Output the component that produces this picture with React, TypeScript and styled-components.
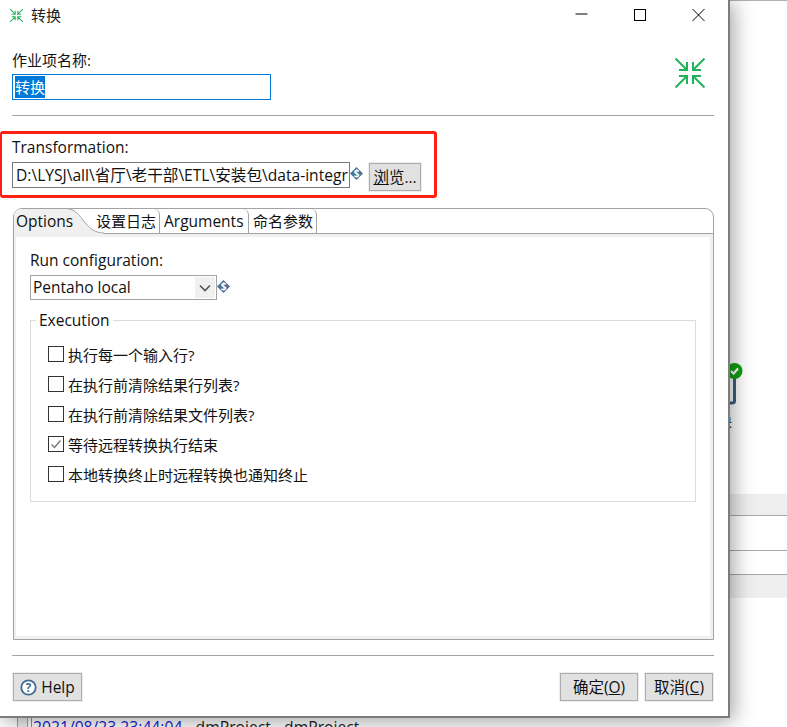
import React from "react";
import styled, { createGlobalStyle } from "styled-components";

const Global = createGlobalStyle`
  html, body { margin: 0; padding: 0; background: #fff; }
  body { font-family: "Open Sans", "Noto Sans CJK SC", sans-serif; font-size: 15px; color: #111; }
`;

const Page = styled.div`
  position: relative;
  width: 787px;
  height: 727px;
  overflow: hidden;
  background: #fff;
`;

const SidePanel = styled.div`
  margin-left: 729px;
  height: 727px;
  border-top: 1px solid #b0b0b0;
  margin-top: 0;
  padding-top: 493px;
  box-sizing: border-box;
`;

const SideBand = styled.div<{ $h: number; $gray?: boolean; $line?: boolean }>`
  height: ${(p) => p.$h}px;
  box-sizing: border-box;
  background: ${(p) => (p.$gray ? "#efefef" : "#fff")};
  border-bottom: ${(p) => (p.$line ? "1px solid #a8a8a8" : "none")};
`;

const Node = styled.svg`
  position: absolute;
  left: 720px;
  top: 360px;
`;

const NodeLabel = styled.span`
  position: absolute;
  left: 717px;
  top: 410px;
  font-size: 15px;
  line-height: 20px;
`;

const LogStrip = styled.div`
  position: absolute;
  left: 17px;
  top: 717px;
  display: flex;
  height: 10px;
  overflow: hidden;
`;

const Grip = styled.div`
  width: 9px;
  height: 10px;
  border-left: 1px solid #a0a0a0;
  border-right: 1px solid #a0a0a0;
  margin-right: 3px;
  background: #f0f0f0;
`;

const LogText = styled.div`
  border-left: 1px solid #909090;
  padding-left: 1px;
  white-space: pre;
  font-size: 15.7px;
  line-height: 20px;
  color: #222;
`;

const LogDate = styled.span`
  color: #1a1ad8;
`;

const Dialog = styled.div`
  position: absolute;
  left: 0;
  top: 0;
  width: 730px;
  height: 718px;
  box-sizing: border-box;
  background: #fff;
  border-right: 2px solid #7c7c7c;
  border-bottom: 2px solid #7c7c7c;
  box-shadow: 3px 3px 20px rgba(0, 0, 0, 0.38);
  display: flex;
  flex-direction: column;
`;

const TitleBar = styled.div`
  height: 30px;
  display: flex;
  align-items: center;
  position: relative;
`;

const TitleIcon = styled.div`
  width: 13px;
  height: 13px;
  margin-left: 10px;
  margin-right: 8px;
  display: flex;
`;

const TitleText = styled.span`
  font-size: 15px;
  color: #222;
  line-height: 30px;
`;

const WindowButtons = styled.div`
  margin-left: auto;
  margin-right: 23px;
  display: flex;
  gap: 46px;
  align-items: center;
`;

const Body = styled.div`
  flex: 1;
  padding: 20px 14px 0 12px;
  display: flex;
  flex-direction: column;
`;

const HeaderRow = styled.div`
  display: flex;
  justify-content: space-between;
  align-items: flex-start;
  height: 65px;
`;

const FieldLabel = styled.div<{ $cjk?: boolean }>`
  font-size: ${(p) => (p.$cjk ? 15 : 15.5)}px;
  line-height: 20px;
  height: 20px;
`;

const NameInput = styled.div`
  width: 259px;
  height: 26px;
  margin-top: 4px;
  box-sizing: border-box;
  border: 1px solid #0078d7;
  padding: 1px 2px;
  line-height: 22px;
  font-size: 15px;
`;

const Selected = styled.span`
  display: inline-block;
  background: #0078d7;
  color: #fff;
  height: 22px;
`;

const BigIconSlot = styled.div`
  margin: 8px 9px 0 0;
`;

const Rule = styled.div`
  height: 1px;
  background: #a3a3a3;
`;

const PathSection = styled.div`
  padding-top: 21px;
  height: 92px;
  box-sizing: border-box;
`;

const PathRow = styled.div`
  display: flex;
  align-items: flex-start;
  margin-top: 5px;
`;

const PathInput = styled.div`
  width: 338px;
  height: 26px;
  box-sizing: border-box;
  border: 1px solid #7a7a7a;
  padding: 0 0 0 3px;
  overflow: hidden;
  white-space: nowrap;
  font-size: 15.6px;
  line-height: 24px;
`;

const Hint = styled.svg`
  flex: none;
  margin-top: 5px;
`;

const Button = styled.button<{ $w: number }>`
  width: ${(p) => p.$w}px;
  height: 28px;
  box-sizing: border-box;
  background: #e1e1e1;
  border: 1px solid #adadad;
  outline: 1px solid #eeeeee;
  border-radius: 0;
  padding: 0;
  font-family: inherit;
  font-size: 15.5px;
  line-height: 26px;
  color: #111;
  display: inline-flex;
  align-items: center;
  justify-content: center;
  gap: 4px;
`;

const BrowseButton = styled(Button)`
  margin: 1px 0 0 6px;
`;

const Folder = styled.div`
  height: 432px;
  margin-left: 1px;
  box-sizing: border-box;
  border: 1px solid #a3a3a3;
  border-radius: 9px 9px 0 0;
  display: flex;
  flex-direction: column;
`;

const TabBar = styled.div`
  height: 24px;
  flex: none;
  display: flex;
  position: relative;
  border-bottom: 1px solid #a3a3a3;
  box-sizing: content-box;
`;

const Tab = styled.div<{ $w: number; $pl: number; $cjk?: boolean }>`
  position: relative;
  width: ${(p) => p.$w}px;
  padding-left: ${(p) => p.$pl}px;
  box-sizing: border-box;
  font-size: ${(p) => (p.$cjk ? 15 : 15.5)}px;
  line-height: 25px;
  white-space: nowrap;
  border-right: 1px solid #a3a3a3;
  border-top-right-radius: 6px;
`;

const ActiveTab = styled(Tab)`
  border-right: none;
`;

const TabText = styled.span`
  position: relative;
`;

const Shoulder = styled.svg`
  position: absolute;
  left: 0;
  top: 0;
`;

const TabPanel = styled.div`
  flex: 1;
  border: 3px solid #f0f0f0;
  border-left-width: 2px;
  padding: 13px 14px 0 14px;
`;

const ComboRow = styled.div`
  display: flex;
  align-items: flex-start;
  margin-top: 5px;
`;

const Combo = styled.div`
  width: 187px;
  height: 25px;
  box-sizing: border-box;
  border: 1px solid #a3a3a3;
  display: flex;
  justify-content: space-between;
  padding-left: 2px;
  font-size: 15.5px;
  line-height: 23px;
`;

const ComboArrow = styled.div`
  width: 20px;
  margin: 1px;
  background: #f0f0f0;
  display: flex;
  align-items: center;
  justify-content: center;
`;

const Group = styled.fieldset`
  margin: 10px 0 0;
  padding: 9px 0 0 17px;
  height: 192px;
  box-sizing: border-box;
  border: 1px solid #dcdcdc;
  min-inline-size: 0;
  display: flex;
  flex-direction: column;
`;

const GroupLegend = styled.legend`
  margin-left: -12px;
  padding: 0 3px;
  font-size: 15.5px;
  line-height: 20px;
`;

const CheckRow = styled.div`
  display: flex;
  align-items: center;
  height: 30px;
  gap: 4px;
  font-size: 15px;
`;

const Box = styled.div`
  width: 16px;
  height: 16px;
  box-sizing: border-box;
  border: 1px solid #333;
  display: flex;
  align-items: center;
  justify-content: center;
`;

const Footer = styled.div`
  display: flex;
  align-items: flex-start;
  padding: 17px 1px 0 1px;
`;

const FooterRule = styled(Rule)`
  margin-top: 15px;
`;

const FooterRight = styled.div`
  margin-left: auto;
  display: flex;
  gap: 7px;
`;

const RedBox = styled.div`
  position: absolute;
  left: 0;
  top: 131px;
  width: 437px;
  height: 67px;
  box-sizing: border-box;
  border: 3px solid #ff2015;
  border-left-width: 2px;
  border-radius: 3px;
  pointer-events: none;
`;

const Converge = ({ size, stroke }: { size: number; stroke: number }) => (
  <svg width={size} height={size} viewBox="0 0 30 30" fill="none" stroke="#22b35a" strokeWidth={stroke}>
    <path d="M0.5 0.5L12 12M12 4V12H4M29.5 0.5L18 12M18 4V12H26M0.5 29.5L12 18M12 26V18H4M29.5 29.5L18 18M18 26V18H26" />
  </svg>
);

const Diamond = () => (
  <Hint width="13" height="13" viewBox="0 0 13 13">
    <path d="M6.5 0L13 6.5L6.5 13L0 6.5Z" fill="#4a7396" />
    <text x="6.5" y="10.2" fontSize="10" fontWeight="700" fill="#fff" textAnchor="middle" fontFamily="Open Sans, sans-serif">$</text>
  </Hint>
);

const Check = ({ label, checked }: { label: string; checked?: boolean }) => (
  <CheckRow>
    <Box>
      {checked && (
        <svg width="12" height="12" viewBox="0 0 12 12" fill="none" stroke="#777" strokeWidth="1.4">
          <path d="M1.5 6.5L4.5 9.5L10.5 2.5" />
        </svg>
      )}
    </Box>
    {label}
  </CheckRow>
);

export default function App() {
  return (
    <Page>
      <Global />
      <SidePanel>
        <SideBand $h={22} $gray $line />
        <SideBand $h={35} $line />
        <SideBand $h={24} $line />
        <SideBand $h={23} $gray />
      </SidePanel>
      <Node width="24" height="48" viewBox="0 0 24 48">
        <path d="M14.5 12V41Q14.5 43 12 43H0" fill="none" stroke="#3f5f7f" strokeWidth="3" />
        <circle cx="14.5" cy="11" r="8" fill="#12a012" />
        <path d="M11 11L13.6 13.6L18 8.6" fill="none" stroke="#fff" strokeWidth="2.2" />
      </Node>
      <NodeLabel>换</NodeLabel>
      <LogStrip>
        <Grip />
        <LogText>
          <LogDate>2021/08/23 23:44:04</LogDate>{" - dmProject - dmProject"}
        </LogText>
      </LogStrip>

      <Dialog>
        <TitleBar>
          <TitleIcon>
            <Converge size={13} stroke={2.4} />
          </TitleIcon>
          <TitleText>转换</TitleText>
          <WindowButtons>
            <svg width="13" height="12" viewBox="0 0 13 12" stroke="#000" strokeWidth="1" fill="none">
              <path d="M0.5 5H12.5" />
            </svg>
            <svg width="12" height="12" viewBox="0 0 12 12" stroke="#000" strokeWidth="1" fill="none">
              <rect x="0.5" y="0.5" width="11" height="11" />
            </svg>
            <svg width="13" height="12" viewBox="0 0 13 12" stroke="#000" strokeWidth="1" fill="none">
              <path d="M0.5 0L12.5 12M12.5 0L0.5 12" />
            </svg>
          </WindowButtons>
        </TitleBar>
        <Body>
          <HeaderRow>
            <div>
              <FieldLabel $cjk>作业项名称:</FieldLabel>
              <NameInput>
                <Selected>转换</Selected>
              </NameInput>
            </div>
            <BigIconSlot>
              <Converge size={30} stroke={2} />
            </BigIconSlot>
          </HeaderRow>
          <Rule />
          <PathSection>
            <FieldLabel>Transformation:</FieldLabel>
            <PathRow>
              <PathInput>D:\LYSJ\all\省厅\老干部\ETL\安装包\data-integr</PathInput>
              <Diamond />
              <BrowseButton $w={52}>
                <span>
                  <u>浏</u>览...
                </span>
              </BrowseButton>
            </PathRow>
          </PathSection>
          <Folder>
            <TabBar>
              <Shoulder width="92" height="25" viewBox="0 0 92 25">
                <path d="M0 25V8Q0 0 8 0H54C68 0 70 24 90 24V25Z" fill="#f0f0f0" />
                <path d="M54 0C68 0 70 24 90 24" fill="none" stroke="#a3a3a3" />
              </Shoulder>
              <ActiveTab $w={82} $pl={2}>
                <TabText>Options</TabText>
              </ActiveTab>
              <Tab $w={64} $pl={0} $cjk>
                <TabText>设置日志</TabText>
              </Tab>
              <Tab $w={89} $pl={4}>
                <TabText>Arguments</TabText>
              </Tab>
              <Tab $w={68} $pl={4} $cjk>
                <TabText>命名参数</TabText>
              </Tab>
            </TabBar>
            <TabPanel>
              <FieldLabel>Run configuration:</FieldLabel>
              <ComboRow>
                <Combo>
                  Pentaho local
                  <ComboArrow>
                    <svg width="12" height="8" viewBox="0 0 12 8" fill="none" stroke="#555" strokeWidth="1.6">
                      <path d="M1 1.5L6 6.5L11 1.5" />
                    </svg>
                  </ComboArrow>
                </Combo>
                <Diamond />
              </ComboRow>
              <Group>
                <GroupLegend>Execution</GroupLegend>
                <Check label="执行每一个输入行?" />
                <Check label="在执行前清除结果行列表?" />
                <Check label="在执行前清除结果文件列表?" />
                <Check label="等待远程转换执行结束" checked />
                <Check label="本地转换终止时远程转换也通知终止" />
              </Group>
            </TabPanel>
          </Folder>
          <FooterRule />
          <Footer>
            <Button $w={69}>
              <svg width="17" height="17" viewBox="0 0 17 17">
                <circle cx="8.5" cy="8.5" r="7.2" fill="#fff" stroke="#3f6b8f" strokeWidth="1.8" />
                <text x="8.5" y="12.6" fontSize="11.5" fontWeight="700" fill="#3f6b8f" textAnchor="middle" fontFamily="Open Sans, sans-serif">?</text>
              </svg>
              Help
            </Button>
            <FooterRight>
              <Button $w={78}>
                <span>
                  确定(<u>O</u>)
                </span>
              </Button>
              <Button $w={68}>
                <span>
                  取消(<u>C</u>)
                </span>
              </Button>
            </FooterRight>
          </Footer>
        </Body>
      </Dialog>
      <RedBox />
    </Page>
  );
}
